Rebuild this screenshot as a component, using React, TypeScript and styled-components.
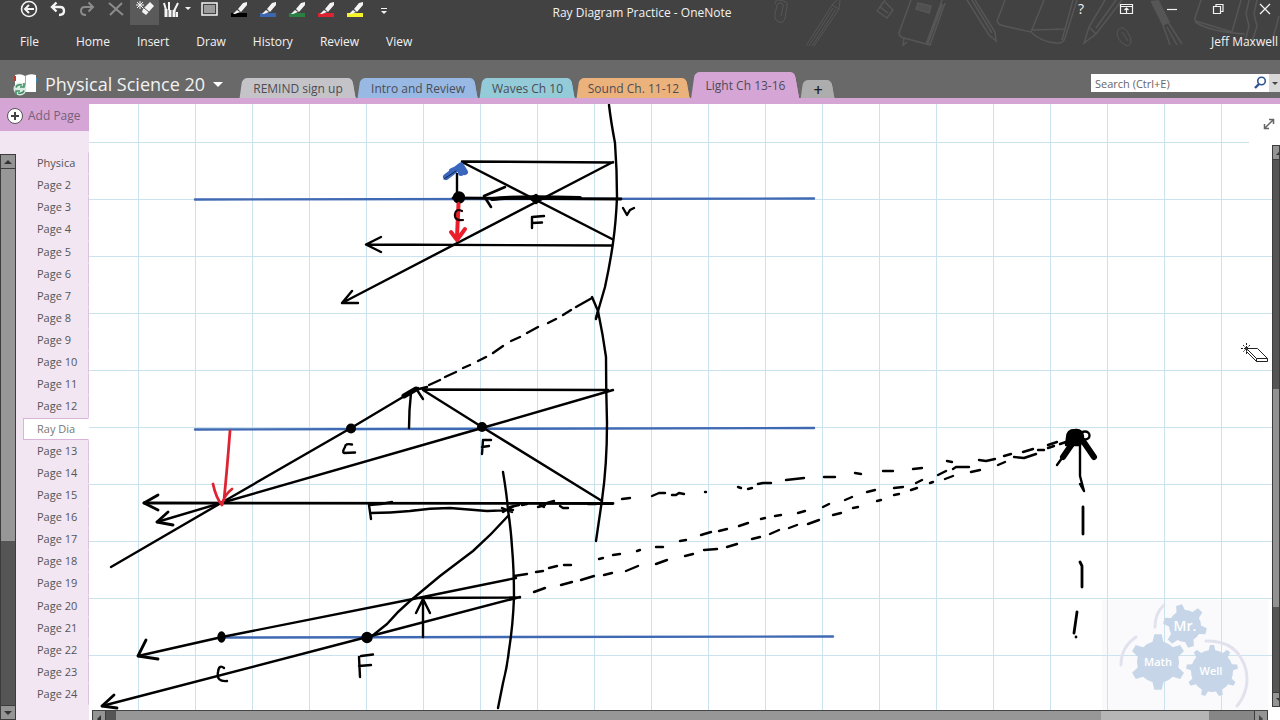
import React from "react";
import styled, { createGlobalStyle, css } from "styled-components";

const GlobalStyle = createGlobalStyle`
  *, *::before, *::after { box-sizing: border-box; }
  body { margin: 0; }
  button, input { font: inherit; color: inherit; }
  button { border: 0; padding: 0; background: none; cursor: pointer; }
`;

const PINK = "#d5a5d5";

const Window = styled.div`
  display: flex;
  flex-direction: column;
  min-height: 100vh;
  overflow: hidden;
  background: #fff;
  font-family: "Open Sans", "Noto Sans", sans-serif;
  font-size: 12px;
  line-height: 16px;
  color: #555;
`;

/* ---------- title bar and ribbon ---------- */

const Header = styled.header`
  position: relative;
  height: 60px;
  background: #424242;
  color: #f2f2f2;
`;

const Doodles = styled.svg`
  position: absolute;
  top: 0;
  right: 0;
  width: 520px;
  height: 60px;
  fill: none;
  stroke: #565656;
  stroke-width: 1.5;
`;

const TitleRow = styled.div`
  position: relative;
  display: grid;
  grid-template-columns: 1fr auto 1fr;
  height: 25px;
`;

const QuickAccess = styled.div`
  display: flex;
  padding-left: 14px;
`;

const Tool = styled.button<{ $wide?: boolean; $active?: boolean; $dim?: boolean }>`
  display: flex;
  justify-content: center;
  flex: none;
  width: ${(p) => (p.$wide ? 36 : 29)}px;
  height: 25px;
  color: ${(p) => (p.$dim ? "#8c8c8c" : "#f4f4f4")};
  background: ${(p) => (p.$active ? "#5a5a5a" : "transparent")};
`;

const Icon = styled.svg`
  flex: none;
  width: 20px;
  height: 20px;
  fill: none;
  stroke: currentColor;
  stroke-width: 2;
`;

const WideIcon = styled(Icon)`
  width: 32px;
`;

const WindowTitle = styled.h1`
  margin: 0;
  padding: 5px 0 0 4px;
  font-size: 12px;
  font-weight: 400;
  line-height: 16px;
`;

const WindowControls = styled.div`
  display: flex;
  justify-content: flex-end;
`;

const Control = styled.button`
  display: flex;
  justify-content: center;
  width: 46px;
  height: 25px;
  font-size: 14px;
  line-height: 18px;

  &:last-child {
    width: 38px;
    padding-left: 8px;
  }
`;

const MenuRow = styled.nav`
  position: relative;
  display: flex;
  align-items: center;
  gap: 27px;
  padding: 9px 2px 0 20px;
`;

const MenuItem = styled.button`
  line-height: 16px;

  &:first-child {
    margin-right: 10px;
  }
`;

const UserName = styled.span`
  margin-left: auto;
`;

/* ---------- notebook bar ---------- */

const NotebookBar = styled.div`
  display: flex;
  align-items: flex-end;
  height: 44px;
  padding-left: 13px;
  background: #696969;
  border-bottom: 6px solid ${PINK};
`;

const Notebook = styled.button`
  display: flex;
  align-items: center;
  flex: none;
  gap: 8px;
  width: 226px;
  height: 28px;
  font-size: 18px;
  line-height: 24px;
  color: #f2f2f2;
`;

const NotebookIcon = styled.svg`
  flex: none;
  width: 24px;
  height: 24px;
`;

const Caret = styled.i<{ $size?: number; $color?: string; $up?: boolean }>`
  width: 0;
  height: 0;
  border: ${(p) => p.$size ?? 5}px solid transparent;
  ${(p) =>
    p.$up
      ? css`
          border-top: 0;
          border-bottom-color: ${p.$color ?? "#fff"};
        `
      : css`
          border-bottom: 0;
          border-top-color: ${p.$color ?? "#fff"};
        `}
`;

const Tabs = styled.div`
  display: flex;
  align-items: flex-end;
`;

const Tab = styled.button<{ $color: string; $width: number; $tall?: boolean }>`
  position: relative;
  z-index: 0;
  flex: none;
  width: ${(p) => p.$width}px;
  height: ${(p) => (p.$tall ? 26 : 20)}px;
  padding-top: 2px;
  color: #4c4c54;

  &::before,
  &::after {
    content: "";
    position: absolute;
    z-index: -1;
    top: 0;
    bottom: 0;
    background: ${(p) => p.$color};
  }
  &::before {
    left: 2px;
    right: 40%;
    border-radius: 5px 0 0 0;
    transform: skewX(-8deg);
  }
  &::after {
    left: 40%;
    right: 2px;
    border-radius: 0 5px 0 0;
    border-right: 1px solid #5d5d5d;
    transform: skewX(10deg);
  }
`;

const AddTab = styled(Tab)`
  height: 18px;
  color: #222;
  font-size: 16px;
  font-weight: 600;
`;

const Search = styled.form`
  display: flex;
  flex: none;
  align-self: flex-start;
  width: 189px;
  height: 18px;
  margin: 14px 0 0 auto;
  background: #fff;
  font-size: 11px;
`;

const SearchInput = styled.input`
  flex: 1;
  min-width: 0;
  padding: 1px 4px 0;
  border: 0;
  outline: 0;
  background: none;

  &::placeholder {
    color: #666;
    opacity: 1;
  }
`;

const SearchButton = styled.button`
  display: flex;
  align-items: center;
  justify-content: center;
  width: 18px;
`;

const SearchMenu = styled.button`
  display: flex;
  align-items: center;
  justify-content: center;
  width: 11px;
  background: #d8d8d8;
`;

/* ---------- body ---------- */

const Body = styled.div`
  display: flex;
  flex: 1;
`;

const Sidebar = styled.aside`
  display: flex;
  flex-direction: column;
  flex: none;
  width: 89px;
  background: #f1e6f2;
`;

const AddPage = styled.button`
  display: flex;
  align-items: center;
  gap: 4px;
  height: 27px;
  padding: 0 0 4px 6px;
  background: ${PINK};
  color: #75607a;
`;

const PagesArea = styled.div`
  display: flex;
  flex: 1;
`;

const PageList = styled.ul`
  display: flex;
  flex-direction: column;
  flex: 1;
  margin: 0;
  padding: 21px 0 15px 7px;
  list-style: none;
  font-size: 11px;
`;

const PageItem = styled.li<{ $current?: boolean }>`
  display: flex;
  flex: 1 0 22px;
  align-items: center;
  padding-left: 13px;
  white-space: nowrap;
  border: 1px solid transparent;
  border-right-color: #dcc4de;
  ${(p) =>
    p.$current &&
    css`
      background: #fff;
      border-color: #d9b3da;
      border-right-color: #fff;
      color: #777;
    `}
`;

const PageLink = styled.a`
  color: inherit;
  text-decoration: none;
`;

const VerticalBar = styled.div<{ $width: number; $top: number; $bottom?: number }>`
  display: flex;
  flex-direction: column;
  flex: none;
  width: ${(p) => p.$width}px;
  margin: ${(p) => p.$top}px 0 ${(p) => p.$bottom ?? 0}px;
  overflow: hidden;
  background: #555;
  border: solid #3c3c3c;
  border-width: 0 1px;
`;

const BarButton = styled.button`
  display: flex;
  align-items: center;
  justify-content: center;
  flex: none;
  width: 14px;
  height: 15px;
  background: #949494;
  border: solid #3c3c3c;
  border-width: 1px 0;
`;

const BarPart = styled.div<{ $grow: number; $color: string }>`
  flex: ${(p) => p.$grow} 1 0;
  background: ${(p) => p.$color};
`;

const Workspace = styled.main`
  position: relative;
  display: flex;
  flex-direction: column;
  flex: 1;
  min-width: 0;
`;

const CanvasRow = styled.div`
  display: flex;
  flex: 1;
`;

const CanvasFrame = styled.div`
  position: relative;
  flex: 1;
  min-width: 0;
`;

const Canvas = styled.svg`
  position: absolute;
  inset: 0;
  width: 100%;
  height: 100%;
  fill: none;
  stroke-linecap: round;
  stroke-linejoin: round;
`;

const ExpandButton = styled.button`
  position: absolute;
  top: 14px;
  right: 5px;
  width: 12px;
  height: 12px;
  z-index: 1;
`;

const HorizontalBar = styled.div`
  display: flex;
  height: 10px;
  margin: 0 12px 0 3px;
  overflow: hidden;
  background: #555;
  border-top: 1px solid #444;
`;

const SideButton = styled(BarButton)`
  border-width: 0 1px;
`;

/* ---------- data ---------- */

const menus = ["File", "Home", "Insert", "Draw", "History", "Review", "View"];

const tabs = [
  { label: "REMIND sign up", color: "#c4c4c8", width: 118 },
  { label: "Intro and Review", color: "#97b9e4", width: 122 },
  { label: "Waves Ch 10", color: "#93cbd8", width: 97 },
  { label: "Sound Ch. 11-12", color: "#ecb27c", width: 115 },
  { label: "Light Ch 13-16", color: PINK, width: 109, tall: true },
];

const pages = [
  "Physica",
  ...Array.from({ length: 11 }, (_, i) => `Page ${i + 2}`),
  "Ray Dia",
  ...Array.from({ length: 12 }, (_, i) => `Page ${i + 13}`),
];

const pens = [
  { name: "Black pen", color: "#000" },
  { name: "Blue pen", color: "#3c66b0" },
  { name: "Green pen", color: "#2a7f43" },
  { name: "Red pen", color: "#dc2430" },
  { name: "Yellow highlighter", color: "#f6f32a" },
];

const columns = Array.from({ length: 20 }, (_, i) => 138 + i * 57);
const rows = Array.from({ length: 10 }, (_, i) => 142 + i * 57);

/* Dashes of the sketched virtual rays, as polylines. */
const dashes = [
  // ray extended back to the second mirror
  "429,385 440,380", "445,377 456,372", "463,368 470,365", "478,361 486,357", "493,353 503,346",
  "511,341 520,337", "527,333 538,327", "548,323 556,319", "563,315 571,310", "576,307 592,298",
  // upper virtual ray
  "510,507 519,505", "522,505 527,504", "538,507 545,505", "540,505 544,507", "547,503 554,501",
  "560,506 563,508 568,508", "588,504 596,504", "622,499 630,498", "652,496 659,493 665,493",
  "672,495 676,495 679,493 684,494", "705,492 706,492", "738,487 741,488", "748,489 752,488",
  "758,484 763,483 771,483", "786,480 804,478", "824,477 835,477", "855,473 861,474",
  "883,471 893,471", "913,469 922,468", "947,461 952,462", "979,460 986,461 995,459",
  // middle virtual ray
  "514,576 527,574", "536,572 543,571", "549,568 557,566", "564,565 571,565", "599,559 603,558",
  "613,555 620,554", "637,551 640,550", "656,547 663,547", "680,541 686,540", "701,535 711,532",
  "719,531 727,529", "739,526 748,523", "761,519 765,518", "775,516 781,515", "798,513 805,511",
  "823,507 829,504", "845,500 852,497", "867,492 875,490", "894,488 903,487", "916,483 922,480",
  "938,475 946,471", "953,469 956,467 969,467", "1004,456 1011,454", "1023,452 1033,449",
  "1048,445 1057,442",
  // lower virtual ray
  "534,592 545,588", "561,585 572,582", "581,580 594,576", "604,575 612,573", "626,571 638,566",
  "656,564 667,560", "685,556 693,554", "704,550 717,549", "727,547 737,544", "752,539 760,537",
  "770,534 779,530", "789,528 797,525", "808,524 819,520", "833,515 841,513", "853,508 858,507",
  "877,501 881,500", "894,495 899,494", "911,490 917,488", "930,483 933,482", "945,479 953,476",
  "971,472 980,470", "998,465 1005,462", "1014,457 1024,458 1036,454", "1038,450 1044,450",
  "1048,448 1054,446", "1060,444 1066,442",
];

/* Outline of a cog with evenly spaced trapezoid teeth. */
function gear(cx: number, cy: number, inner: number, outer: number, teeth: number, start: number, half: number) {
  const at = (r: number, deg: number) => {
    const a = (deg * Math.PI) / 180;
    return `${(cx + r * Math.cos(a)).toFixed(1)} ${(cy + r * Math.sin(a)).toFixed(1)}`;
  };
  let d = "";
  for (let i = 0; i < teeth; i++) {
    const a = start + (i * 360) / teeth;
    d += `${i ? `A${inner} ${inner} 0 0 1 ` : "M"}${at(inner, a - half)}L${at(outer, a - half * 0.5)}L${at(outer, a + half * 0.5)}L${at(inner, a + half)}`;
  }
  return `${d}A${inner} ${inner} 0 0 1 ${at(inner, start - half)}Z`;
}

/* ---------- pieces ---------- */

function HeaderDoodles() {
  return (
    <Doodles viewBox="760 0 520 60" aria-hidden="true">
      <path d="M775 4q0-5 5-4l6 2q2 2 1 4l-2 12q-2 6-6 4-5-2-4-8l2-9q1-3 4-2t2 4l-2 9" strokeWidth="1" />
      <path d="M837 0l-5 5-26 41M840 0l-1 9-25 37M833 8l-24 38M836 9l-24 37M832 5l7 4" strokeWidth="1" />
      <path d="M877 11l8-11M877 11l10 7 6-8-8-8M880 7l8 6" />
      <path d="M911 0l-12 33q0 4 5 5l26 7 15-42M904 38l-1 7 4-3M930 45l-3-3 15-42" />
      <path d="M918 3l13 3-2 7-13-4z" fill="#505050" />
      <path d="M927 44l15-40" strokeWidth="3" />
      <path d="M967 0l22 35 7 6-1-9-20-32M972 0l20 33" />
      <path d="M1005 0l-8 21q1 4 7 5l27 6L1044 0M1031 30l35-1M1031 32q10 10 25 11 7 1 9-5L1077 0M1062 40L1073 0" />
      <path d="M1105 0l-16 27-5 16 12-9 26-34M1090 28l6 6M1096 28l20-28" />
      <path d="M1118 30q-3 6 4 13 6 5 9 0 1-5-4-12-6-6-9-1zM1122 32l6 9" strokeWidth="1" />
      <path d="M1151 1l12 24 6-3L1158 0" fill="#565656" />
      <path d="M1163 25l7 20M1168 22l14 22M1167 27l10 18" />
      <path d="M1201 0l-6 18q-1 3 4 4l33 10 9-32M1195 22q16 10 50 12M1249 0l-3 14 3 12-4 16M1257 0l-3 14 3 12-5 16M1279 16l-7 26" />
    </Doodles>
  );
}

function PenIcon({ color }: { color: string }) {
  return (
    <Icon viewBox="0 0 20 20">
      <path d="M2 13h16v4H2z" fill={color} stroke="none" />
      <path d="M18 2l-4 1-5 6 3 3 6-7zM8 10l-4 4 2 0 5-2z" fill="currentColor" stroke="none" />
    </Icon>
  );
}

function CanvasDrawing() {
  return (
    <Canvas role="img" aria-label="Ray diagrams for concave mirrors">
      <g transform="translate(-89 -104)">
        <rect x="1102" y="600" width="166" height="110" fill="#fafafc" />
        <g stroke="#cbe2ef" strokeWidth="1" strokeLinecap="butt">
          {columns.map((x) => (
            <path key={x} d={`M${x}.5 104V710`} />
          ))}
          {rows.map((y, i) => (
            <path key={y} d={`M89 ${y}.5H${i ? 1272 : 1249}`} />
          ))}
        </g>

        {/* watermark */}
        <g fill="#c6d6e8">
          <path d={gear(1185, 626, 16, 22, 6, 14, 16)} />
          <path d={gear(1158, 662, 21, 28, 6, -90, 15)} />
          <path d={gear(1212, 671, 21, 26, 9, -90, 9)} />
          <g stroke="#e2e2ee" strokeWidth="3" fill="none">
            <path d="M1164 605Q1155 613 1155 627M1136 637Q1121 647 1121 665M1206 641Q1238 640 1246 670 1250 690 1237 706" />
          </g>
          <g fill="#fff" fontWeight="600" textAnchor="middle">
            <text x="1185" y="631" fontSize="14">Mr.</text>
            <text x="1158" y="666" fontSize="11">Math</text>
            <text x="1211" y="675" fontSize="11">Well</text>
          </g>
        </g>

        {/* principal axes */}
        <path d="M195 199.500L814 198.500M195 429.500L814 428M221 637.500L833 636.500" stroke="#3f69b3" strokeWidth="2.400" />

        <g stroke="#000" strokeWidth="2.400">
          {/* first diagram: object at C */}
          <path d="M609 105Q611 122 615 143 617 170 617 197 616 222 613 243 610 264 605 287L596 318" />
          <path d="M462 161.500L613 162.500M462 162L612 239M613 162L342 303M352 291L342 303 358 303" />
          <path d="M366 244.500L612 245.500M381 237L366 244.500 381 252" />
          <path d="M453 198L621 199" strokeWidth="2.800" />
          <path d="M492 199Q515 196 580 198" strokeWidth="4" />
          <path d="M505 187L484 196 491 207" strokeWidth="2.600" />
          <path d="M457 174V196" />
          <circle cx="459" cy="197.500" r="5" fill="#000" />
          <path d="M530 198L536 195 541 199 536 203z" fill="#000" />
          <path d="M532 217V228M532 217L544 216M532 223L542 222.500M623 208L627 215 630 210 634 208" />
        </g>
        <path d="M446 177L461 165.500 465 172M452 171L461 167V173" stroke="#3b66bd" strokeWidth="6" />
        <path d="M444 179L456 171" stroke="#142544" strokeWidth="1" />
        <path d="M458.500 204L457 237M451 232L457 240 465 229" stroke="#ea1f2b" strokeWidth="4" />
        <path d="M462 211Q456 208 455 214 454 221 463 220" stroke="#1a0000" strokeWidth="2.200" />

        <g stroke="#000" strokeWidth="2.400">
          {/* second diagram: object beyond F, image beyond C */}
          <path d="M592 297L598 311 596 319M598 311Q603 335 606 357 606 390 607 423 607 465 602 500L596 541" />
          <path d="M423 389.500L608 390M423 390L482 427 602 501M613 390L482 428 221 503 157 522" />
          <path d="M418 388L351 428 221 503 111 567" />
          <path d="M409 428Q409 410 411 393M417 390L423 399M419 389L427 387" />
          <path d="M404 396L416 389" strokeWidth="5" />
          <circle cx="351" cy="428.500" r="3.800" fill="#000" />
          <circle cx="482" cy="427" r="3.800" fill="#000" />
          <path d="M352 444.500Q345 443 345 447 342 452 344 453L355 452.500M483 440L482 454M483 440H491M482 447L489 446" />
          <path d="M168 512L157 522 173 525M158 495L144 503 158 510" strokeWidth="2.800" />
          <path d="M144 503L613 503.500" strokeWidth="2.800" />

          {/* third diagram: object between F and the mirror */}
          <path d="M369 505L371 519M369 505L381 504 392 502M371 513Q390 513 410 511 430 508 450 508L487 511 513 510M502 508L512 512M503 512L514 506" />
          <path d="M503 472Q507 496 508 510 511 530 512 547 514 570 514 597 513 625 509 650 507 668 503 683L498 708" />
          <path d="M372 636L387 624Q397 612 410 601L440 576 473 551 Q492 534 508 516" />
          <path d="M138 656L222 637 418 598 516 578M418 598L520 597.500M102 706L367 637 520 597" />
          <path d="M146 640L138 656 158 659M114 695L102 706 117 708" strokeWidth="2.800" />
          <path d="M423 637V599M416 613L423 599 430 613" />
          <ellipse cx="221.500" cy="637" rx="3" ry="4.500" fill="#000" />
          <circle cx="367" cy="637.500" r="4.500" fill="#000" />
          <path d="M224 668Q219 664 218 672 216 682 227 681" />
          <path d="M359 657L360 677M361 656L373 654.500M359 666L371 665" />

          {dashes.map((points) => (
            <polyline key={points} points={points} />
          ))}

          {/* virtual image */}
          <path d="M1067 438Q1067 430 1075 430 1083 429 1083 438L1080 445H1066z" fill="#000" />
          <ellipse cx="1085" cy="435.500" rx="4.500" ry="4" />
          <path d="M1074 441L1063 457M1083 441L1094 457" strokeWidth="6" />
          <path d="M1070 447L1057 465M1080 442V476L1084 491 1080 484" />
          <path d="M1083 507V534M1080 562L1082 566V587M1077 612L1074 633M1076 637V637" strokeWidth="2.800" />
        </g>

        {/* real image of the second diagram */}
        <path d="M230 431Q227 470 224 500M213 484Q216 498 222 505 224 495 232 489" stroke="#dd2433" strokeWidth="2.800" />

        {/* eraser pointer */}
        <g stroke="#222" strokeWidth="1" strokeLinecap="butt" fill="#fff">
          <path d="M1247.500 348.500H1257.500L1267.500 358.500V361.500H1256.500L1246.500 351.500ZM1256.500 361.500V358.500H1267.500M1256.500 358.500L1247.500 349.500" />
          <path d="M1246.500 343V354M1241 348.500H1252M1243 345L1250 352M1250 345L1243 352" strokeDasharray="2 1" />
        </g>
      </g>
    </Canvas>
  );
}

export default function App() {
  return (
    <Window>
      <GlobalStyle />
      <Header>
        <HeaderDoodles />
        <TitleRow>
          <QuickAccess>
            <Tool aria-label="Back">
              <Icon viewBox="0 0 20 20">
                <circle cx="10" cy="9" r="7.500" strokeWidth="1.600" />
                <path d="M15 9H6M10 5L6 9l4 4" />
              </Icon>
            </Tool>
            <Tool aria-label="Undo">
              <Icon viewBox="0 0 20 20">
                <path d="M8.500 2.500L4 7l4.500 4.500M4 7h8q4 0 4 4t-5 4" strokeWidth="2.400" />
              </Icon>
            </Tool>
            <Tool aria-label="Redo" $dim>
              <Icon viewBox="0 0 20 20">
                <path d="M11.500 2.500L16 7l-4.500 4.500M16 7H8q-4 0-4 4t5 4" strokeWidth="2" />
              </Icon>
            </Tool>
            <Tool aria-label="Delete" $dim>
              <Icon viewBox="0 0 20 20">
                <path d="M3 3l14 12M16 3L4 15" />
              </Icon>
            </Tool>
            <Tool aria-label="Eraser" $active>
              <Icon viewBox="0 0 20 20">
                <path d="M8 9l7-7 4 4-8 9-4-3z" fill="currentColor" stroke="none" />
                <path d="M5 1v8M1 5h8M2 2l6 6M8 2L2 8" strokeWidth="1" />
                <path d="M9 8l5 4" stroke="#5a5a5a" strokeWidth="1" />
              </Icon>
            </Tool>
            <Tool aria-label="Pens" $wide>
              <WideIcon viewBox="0 0 32 20">
                <path d="M3 3l2 7M8 2v8M17 3l-4 8" strokeWidth="2" />
                <path d="M5 9v8M9 10v7M13 10v7" strokeWidth="3" />
                <path d="M16 12v5" strokeWidth="2" />
                <path d="M24 7h6l-3 3z" fill="currentColor" stroke="none" />
              </WideIcon>
            </Tool>
            <Tool aria-label="Full page view">
              <Icon viewBox="0 0 20 20">
                <path d="M2 3h15v12H2z" strokeWidth="1.500" />
                <path d="M4 6h11M4 8h11M4 10h11M4 12h11" strokeWidth="1" />
              </Icon>
            </Tool>
            {pens.map((pen) => (
              <Tool key={pen.name} aria-label={pen.name}>
                <PenIcon color={pen.color} />
              </Tool>
            ))}
            <Tool aria-label="Customize toolbar">
              <Icon viewBox="0 0 20 20">
                <path d="M7 8.500h6" strokeWidth="1" />
                <path d="M7 11h6l-3 3z" fill="currentColor" stroke="none" />
              </Icon>
            </Tool>
          </QuickAccess>
          <WindowTitle>Ray Diagram Practice - OneNote</WindowTitle>
          <WindowControls>
            <Control aria-label="Help">?</Control>
            <Control aria-label="Ribbon display options">
              <Icon viewBox="0 0 20 20">
                <path d="M3.500 4.500h12v9h-12zM3.500 6.500h12M9.500 13V8M7.500 10l2-2 2 2" strokeWidth="1.200" />
              </Icon>
            </Control>
            <Control aria-label="Minimize">
              <Icon viewBox="0 0 20 20">
                <path d="M4 9.500h10" strokeWidth="1.200" />
              </Icon>
            </Control>
            <Control aria-label="Restore">
              <Icon viewBox="0 0 20 20">
                <path d="M4.500 6.500h7v7h-7zM7 6V4.500h7v7h-2" strokeWidth="1.200" />
              </Icon>
            </Control>
            <Control aria-label="Close">
              <Icon viewBox="0 0 20 20">
                <path d="M5 4l10 10M15 4L5 14" strokeWidth="1.300" />
              </Icon>
            </Control>
          </WindowControls>
        </TitleRow>
        <MenuRow>
          {menus.map((label) => (
            <MenuItem key={label}>{label}</MenuItem>
          ))}
          <UserName>Jeff Maxwell</UserName>
        </MenuRow>
      </Header>

      <NotebookBar>
        <Notebook>
          <NotebookIcon viewBox="0 0 24 24">
            <path d="M2 3q6-2 10 1 5-3 11-1v17H2z" fill="#fff" />
            <path d="M12.500 4v15" stroke="#aaa" fill="none" />
            <path d="M1 4h2v5H1z" fill="#c33a2c" />
            <path d="M23 6h1v4h-1z" fill="#3a8fc0" />
            <circle cx="7" cy="17" r="6.500" fill="#dcebe2" />
            <path d="M3 15.500q1-3.500 6-2.500M11 11v4H7M11 18.500q-1 3.500-6 2.500M3 23v-4h4" fill="none" stroke="#3f8f68" strokeWidth="1.600" />
          </NotebookIcon>
          Physical Science 20
          <Caret />
        </Notebook>
        <Tabs>
          {tabs.map((tab) => (
            <Tab key={tab.label} $color={tab.color} $width={tab.width} $tall={tab.tall}>
              {tab.label}
            </Tab>
          ))}
          <AddTab aria-label="New section" $color="#adadad" $width={36}>
            +
          </AddTab>
        </Tabs>
        <Search>
          <SearchInput aria-label="Search" placeholder="Search (Ctrl+E)" />
          <SearchButton type="button" aria-label="Run search">
            <svg width="14" height="14" viewBox="0 0 14 14" fill="none" stroke="#2f5590">
              <circle cx="8.500" cy="5" r="3.800" strokeWidth="1.600" />
              <path d="M6 8l-4 4" strokeWidth="2.400" />
            </svg>
          </SearchButton>
          <SearchMenu type="button" aria-label="Search scope">
            <Caret $size={3} $color="#444" />
          </SearchMenu>
        </Search>
      </NotebookBar>

      <Body>
        <Sidebar>
          <AddPage>
            <svg width="18" height="18" viewBox="0 0 18 18" fill="none">
              <circle cx="9" cy="9" r="7.500" fill="#fff" stroke="#555" />
              <path d="M9 5v8M5 9h8" stroke="#444" strokeWidth="2" />
            </svg>
            Add Page
          </AddPage>
          <PagesArea>
            <VerticalBar $width={16} $top={23}>
              <BarButton aria-label="Scroll pages up">
                <Caret $up $size={4} $color="#333" />
              </BarButton>
              <BarPart $grow={373} $color="#979797" />
              <BarPart $grow={164} $color="#555" />
              <BarButton aria-label="Scroll pages down">
                <Caret $size={4} $color="#333" />
              </BarButton>
            </VerticalBar>
            <PageList>
              {pages.map((page) => (
                <PageItem key={page} $current={page === "Ray Dia"}>
                  <PageLink href="#">{page}</PageLink>
                </PageItem>
              ))}
            </PageList>
          </PagesArea>
        </Sidebar>

        <Workspace>
          <ExpandButton aria-label="Full screen">
            <svg width="12" height="12" viewBox="0 0 12 12" fill="none" stroke="#666" strokeWidth="1.500">
              <path d="M2 10l8-8M6 1.500h4.500V6M1.500 6v4.500H6" />
            </svg>
          </ExpandButton>
          <CanvasRow>
            <CanvasFrame>
              <CanvasDrawing />
            </CanvasFrame>
            <VerticalBar $width={8} $top={41} $bottom={3}>
              <BarButton aria-label="Scroll up">
                <Caret $up $size={4} $color="#333" />
              </BarButton>
              <BarPart $grow={229} $color="#555" />
              <BarPart $grow={219} $color="#929292" />
              <BarPart $grow={85} $color="#555" />
              <BarButton aria-label="Scroll down">
                <Caret $size={4} $color="#333" />
              </BarButton>
            </VerticalBar>
          </CanvasRow>
          <HorizontalBar>
            <SideButton aria-label="Scroll left">
              <svg width="8" height="8" viewBox="0 0 8 8">
                <path d="M6 0v8L2 4z" fill="#333" />
              </svg>
            </SideButton>
            <BarPart $grow={10} $color="#555" />
            <BarPart $grow={986} $color="#979797" />
            <BarPart $grow={108} $color="#b6b6b6" />
            <BarPart $grow={45} $color="#868686" />
            <SideButton aria-label="Scroll right">
              <svg width="8" height="8" viewBox="0 0 8 8">
                <path d="M2 0v8l4-4z" fill="#444" />
              </svg>
            </SideButton>
          </HorizontalBar>
        </Workspace>
      </Body>
    </Window>
  );
}
